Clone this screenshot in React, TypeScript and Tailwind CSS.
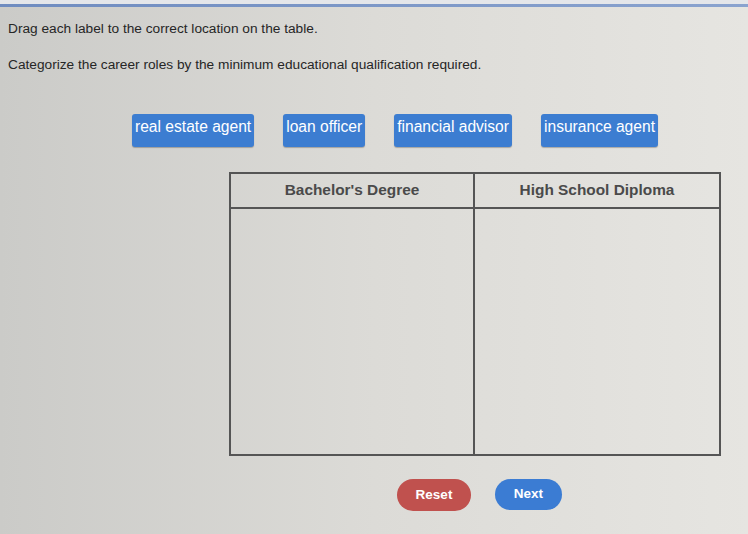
const labels = ["real estate agent", "loan officer", "financial advisor", "insurance agent"];

const columns = ["Bachelor's Degree", "High School Diploma"];

export default function App() {
  return (
    <div
      className="w-[748px] h-[534px] overflow-hidden bg-linear-to-r from-[#cbcbc8] via-[#dcdbd7] to-[#e6e5e1] text-[#262626]"
      style={{ fontFamily: '"Liberation Sans", Arial, sans-serif' }}
    >
      <div className="h-[4px] bg-[#e4e6ea]" />
      <div className="h-[3px] bg-linear-to-r from-[#6f8cc0] to-[#8aa3cf]" />

      <p className="pl-[8px] pt-[13px] text-[13.7px] leading-[18px]">
        Drag each label to the correct location on the table.
      </p>
      <p className="pl-[8px] pt-[18px] text-[13.7px] leading-[18px]">
        Categorize the career roles by the minimum educational qualification required.
      </p>

      <div className="flex gap-[29px] pl-[132px] pt-[40px]">
        {labels.map((l) => (
          <div
            key={l}
            className="h-[33px] rounded-[3px] bg-[#3c7dd1] px-[3px] pt-[3px] text-[15.6px] leading-[20px] text-white shadow-[0_1px_1px_rgba(0,0,0,0.25)]"
          >
            {l}
          </div>
        ))}
      </div>

      <div className="ml-[229px] mt-[25px] w-[492px] h-[284px] border-2 border-[#555] grid grid-cols-2 grid-rows-[35px_1fr]">
        {columns.map((c, i) => (
          <div
            key={c}
            className={`flex items-center justify-center pb-[2px] border-b-2 border-[#555] text-[15.4px] font-bold text-[#4a4a4a] ${i === 0 ? "border-r-2" : ""}`}
          >
            {c}
          </div>
        ))}
        <div className="border-r-2 border-[#555]" />
        <div />
      </div>

      <div className="flex gap-[24px] pl-[397px] pt-[23px]">
        <button className="h-[32px] w-[74px] rounded-full bg-[#c0514e] text-[13.5px] font-bold text-white">
          Reset
        </button>
        <button className="h-[31px] w-[67px] rounded-full bg-[#3b7cd3] text-[13.5px] font-bold text-white">
          Next
        </button>
      </div>
    </div>
  );
}
